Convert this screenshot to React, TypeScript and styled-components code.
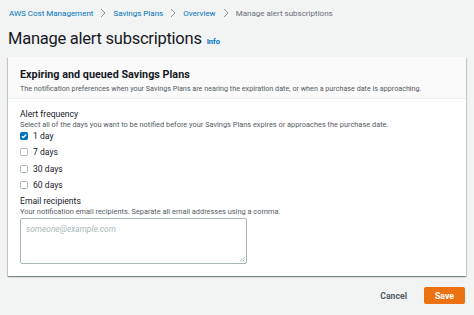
import React from 'react';
import styled, { createGlobalStyle } from 'styled-components';

const GlobalStyle = createGlobalStyle`
  html, body {
    margin: 0;
    padding: 0;
    background: #f2f3f3;
  }
  body {
    font-family: Roboto, "Open Sans", Arial, sans-serif;
    color: #16191f;
  }
  * { box-sizing: border-box; }
`;

const Page = styled.div`
  width: 474px;
  height: 315px;
  padding: 6px 8px 0 9px;
  background: #f2f3f3;
  overflow: hidden;
`;

const Breadcrumbs = styled.nav`
  display: flex;
  align-items: center;
  gap: 6px;
  height: 14px;
  font-size: 8px;
`;

const Crumb = styled.a<{ current?: boolean }>`
  color: ${p => (p.current ? '#687078' : '#0073bb')};
  text-decoration: none;
  white-space: nowrap;
`;

const Chevron = styled.svg`
  width: 8px;
  height: 10px;
`;

const TitleRow = styled.div`
  display: flex;
  align-items: baseline;
  gap: 5px;
  margin-top: 6px;
  margin-left: -1px;
`;

const Title = styled.h1`
  margin: 0;
  font-size: 16.5px;
  letter-spacing: -0.25px;
  font-weight: 400;
  line-height: 26px;
  color: #16191f;
`;

const InfoLink = styled.a`
  font-size: 7.5px;
  font-weight: 700;
  color: #0073bb;
`;

const Card = styled.section`
  margin-top: 5px;
  margin-left: -1px;
  width: 458px;
  background: #fff;
  box-shadow: 0 1px 1px 0 rgba(0, 28, 36, 0.3), 1px 1px 1px 0 rgba(0, 28, 36, 0.15),
    -1px 1px 1px 0 rgba(0, 28, 36, 0.15);
`;

const CardHeader = styled.header`
  background: #fafafa;
  border-bottom: 1px solid #eaeded;
  padding: 10px 12px 0;
  height: 42px;
`;

const CardTitle = styled.h2`
  margin: 0;
  font-size: 10.8px;
  font-weight: 700;
  line-height: 16px;
`;

const Description = styled.p<{ tight?: boolean }>`
  margin: 0;
  font-size: ${p => (p.tight ? '7.4px' : '7.2px')};
  line-height: ${p => (p.tight ? '10px' : '11px')};
  color: #545b64;
  white-space: nowrap;
`;

const CardBody = styled.div`
  padding: 9.5px 12px 12px;
  display: flex;
  flex-direction: column;
`;

const Label = styled.div<{ spaced?: boolean }>`
  font-size: 8.6px;
  line-height: 11px;
  color: #16191f;
  margin-top: ${p => (p.spaced ? '6px' : '0')};
`;

const Options = styled.div`
  display: flex;
  flex-direction: column;
  gap: 5.3px;
  margin-top: 1px;
`;

const OptionRow = styled.label`
  display: flex;
  align-items: center;
  gap: 5px;
  height: 11px;
  font-size: 8.6px;
  color: #16191f;
`;

const Box = styled.span<{ checked?: boolean }>`
  width: 8px;
  height: 8px;
  border-radius: 1.5px;
  border: 1px solid ${p => (p.checked ? '#0073bb' : '#aab7b8')};
  background: ${p => (p.checked ? '#0073bb' : '#fff')};
  display: flex;
  align-items: center;
  justify-content: center;
`;

const TextArea = styled.div`
  margin-top: 0.5px;
  width: 227px;
  height: 46px;
  border: 1px solid #aab7b8;
  border-radius: 2px;
  padding: 4px 5px;
  position: relative;
  font-size: 8.4px;
  line-height: 12px;
  font-style: italic;
  color: #aab7b8;
`;

const Grip = styled.svg`
  position: absolute;
  right: 1px;
  bottom: 1px;
  width: 6px;
  height: 6px;
`;

const Footer = styled.div`
  display: flex;
  justify-content: flex-end;
  align-items: center;
  gap: 17px;
  margin-top: 11.5px;
  padding-right: 1px;
`;

const Button = styled.button<{ primary?: boolean }>`
  font-family: inherit;
  font-size: 8.7px;
  font-weight: 700;
  height: 17px;
  padding: 0 ${p => (p.primary ? '11px' : '0')};
  border: none;
  border-radius: 2px;
  background: ${p => (p.primary ? '#ec7211' : 'transparent')};
  color: ${p => (p.primary ? '#fff' : '#545b64')};
  min-width: ${p => (p.primary ? '40px' : 'auto')};
`;

const days = [
  { label: '1 day', checked: true },
  { label: '7 days', checked: false },
  { label: '30 days', checked: false },
  { label: '60 days', checked: false },
];

const ChevronIcon = () => (
  <Chevron viewBox="0 0 8 10">
    <path d="M2 1l4 4-4 4" fill="none" stroke="#879596" strokeWidth="1" />
  </Chevron>
);

export default function App() {
  return (
    <>
      <GlobalStyle />
      <Page>
        <Breadcrumbs>
          <Crumb>AWS Cost Management</Crumb>
          <ChevronIcon />
          <Crumb>Savings Plans</Crumb>
          <ChevronIcon />
          <Crumb>Overview</Crumb>
          <ChevronIcon />
          <Crumb current>Manage alert subscriptions</Crumb>
        </Breadcrumbs>
        <TitleRow>
          <Title>Manage alert subscriptions</Title>
          <InfoLink>Info</InfoLink>
        </TitleRow>
        <Card>
          <CardHeader>
            <CardTitle>Expiring and queued Savings Plans</CardTitle>
            <Description>
              The notification preferences when your Savings Plans are nearing the expiration date, or when a purchase date is approaching.
            </Description>
          </CardHeader>
          <CardBody>
            <Label>Alert frequency</Label>
            <Description tight>
              Select all of the days you want to be notified before your Savings Plans expires or approaches the purchase date.
            </Description>
            <Options>
              {days.map(d => (
                <OptionRow key={d.label}>
                  <Box checked={d.checked}>
                    {d.checked && (
                      <svg width="6" height="6" viewBox="0 0 7 7">
                        <path d="M1 3.6l1.7 1.7L6 1.8" fill="none" stroke="#fff" strokeWidth="1.5" />
                      </svg>
                    )}
                  </Box>
                  {d.label}
                </OptionRow>
              ))}
            </Options>
            <Label spaced>Email recipients</Label>
            <Description tight>
              Your notification email recipients. Separate all email addresses using a comma.
            </Description>
            <TextArea>
              someone@example.com
              <Grip viewBox="0 0 6 6">
                <path d="M1 5.5L5.5 1M3.5 5.5L5.5 3.5" stroke="#879596" strokeWidth="0.7" />
              </Grip>
            </TextArea>
          </CardBody>
        </Card>
        <Footer>
          <Button>Cancel</Button>
          <Button primary>Save</Button>
        </Footer>
      </Page>
    </>
  );
}
